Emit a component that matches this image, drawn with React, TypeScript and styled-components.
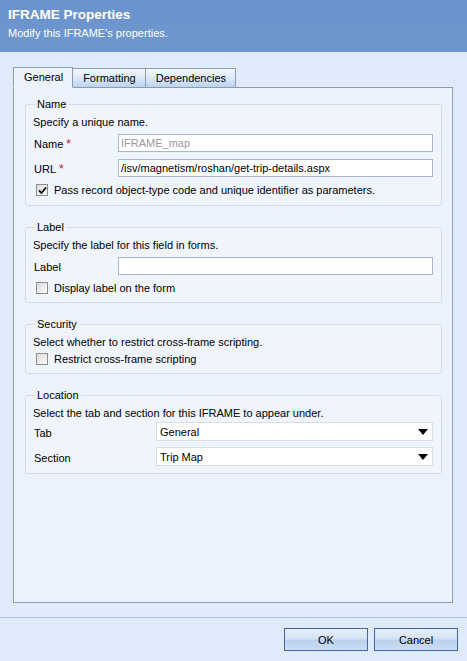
import React from "react";
import styled, { createGlobalStyle } from "styled-components";

const Global = createGlobalStyle`
  html, body { margin: 0; padding: 0; }
  body { font-family: "Liberation Sans", Arial, sans-serif; font-size: 11px; color: #000; background: #dfeafb; }
  * { box-sizing: border-box; }
`;

const Dialog = styled.div`
  width: 467px;
  height: 661px;
  display: flex;
  flex-direction: column;
  background: #dfeafb;
`;

const Header = styled.header`
  height: 52px;
  background: linear-gradient(#6a93cd, #6f97cf);
  color: #fff;
  padding: 6px 8px 0 8px;
  display: flex;
  flex-direction: column;
  gap: 3px;
`;

const Title = styled.h1`
  margin: 0;
  font-size: 13.5px;
  font-weight: bold;
  line-height: 17px;
`;

const Subtitle = styled.p`
  margin: 0;
  font-size: 11px;
  line-height: 15px;
`;

const Content = styled.main`
  flex: 1;
  padding: 15px 14px 14px 13px;
  display: flex;
  flex-direction: column;
`;

const TabBar = styled.div`
  display: flex;
  align-items: flex-end;
  height: 20px;
`;

const Tab = styled.div<{ $active?: boolean }>`
  height: ${(p) => (p.$active ? "21px" : "19px")};
  margin-bottom: ${(p) => (p.$active ? "-1px" : "0")};
  margin-left: -1px;
  &:first-child { margin-left: 0; }
  padding: 0 9px 0 10px;
  display: flex;
  align-items: center;
  border: 1px solid #8e9aae;
  border-bottom: ${(p) => (p.$active ? "1px solid #ebf2fc" : "none")};
  background: ${(p) => (p.$active ? "#ebf2fc" : "linear-gradient(#f4f8fe, #d8e6f8 55%, #bed3f0)")};
  position: relative;
  z-index: ${(p) => (p.$active ? 1 : 0)};
  line-height: 13px;
  padding-top: ${(p) => (p.$active ? "0" : "1px")};
`;

const Panel = styled.section`
  flex: 1;
  border: 1px solid #8e9aae;
  background: #ebf2fc;
  padding: 10px 10px 0 11px;
  display: flex;
  flex-direction: column;
  gap: 15px;
`;

const Group = styled.fieldset<{ $pb?: number }>`
  margin: 0;
  border: 1px solid #d4dce8;
  border-radius: 3px;
  background: #eff4fd;
  padding: 0 8px ${(p) => p.$pb ?? 7}px 7px;
  display: flex;
  flex-direction: column;
  min-width: 0;
`;

const Legend = styled.legend`
  padding: 0 2px;
  margin-left: 2px;
  font-size: 11px;
  line-height: 13px;
`;

const Desc = styled.div`
  margin-top: 4px;
  line-height: 14px;
`;

const Rows = styled.div<{ $mt?: number; $gap?: number }>`
  margin-top: ${(p) => p.$mt ?? 5}px;
  display: flex;
  flex-direction: column;
  gap: ${(p) => p.$gap ?? 7}px;
`;

const Row = styled.div<{ $labelWidth: number }>`
  display: grid;
  grid-template-columns: ${(p) => p.$labelWidth}px 1fr;
  align-items: center;
`;

const FieldLabel = styled.label`
  padding-left: 1px;
  line-height: 14px;
  padding-top: 2px;
`;

const Req = styled.span`
  color: #c8102e;
  margin-left: 3px;
  font-size: 12px;
`;

const Input = styled.div<{ $disabled?: boolean }>`
  height: 18px;
  border: 1px solid #a7b6ca;
  background: #fff;
  color: ${(p) => (p.$disabled ? "#9a9a9a" : "#000")};
  padding: 0 2px;
  line-height: 16px;
  white-space: nowrap;
  overflow: hidden;
`;

const Select = styled.div`
  height: 19px;
  border: 1px solid #d5dde8;
  background: #fff;
  display: flex;
  align-items: center;
  justify-content: space-between;
  padding: 0 4px 0 3px;
  line-height: 16px;
`;

const Arrow = styled.span`
  width: 0;
  height: 0;
  border-left: 5px solid transparent;
  border-right: 5px solid transparent;
  border-top: 6px solid #000;
`;

const CheckRow = styled.div<{ $mt?: number }>`
  display: flex;
  align-items: center;
  gap: 6px;
  height: 16px;
  margin-top: ${(p) => p.$mt ?? 5}px;
  padding-left: 3px;
`;

const Box = styled.span`
  width: 12px;
  height: 12px;
  border: 1px solid #8d8d8d;
  background: linear-gradient(135deg, #dcdcdc, #fafafa);
  display: flex;
  align-items: center;
  justify-content: center;
`;

const Footer = styled.footer`
  height: 44px;
  border-top: 1px solid #aac0dc;
  display: flex;
  justify-content: flex-end;
  align-items: flex-start;
  gap: 6px;
  padding: 10px 9px 0 0;
`;

const Button = styled.button`
  width: 84px;
  height: 23px;
  border: 1px solid #4467a8;
  background: linear-gradient(#e9f0fb, #d5e3f5 45%, #bcd1ee 55%, #cddef3);
  font-family: "Liberation Sans", Arial, sans-serif;
  font-size: 11px;
  color: #000;
  padding: 0;
`;

const Check = ({ checked }: { checked?: boolean }) => (
  <Box>
    {checked && (
      <svg width="9" height="9" viewBox="0 0 9 9">
        <path d="M1 4.5 L3.5 7 L8 1.5" stroke="#000" strokeWidth="1.8" fill="none" />
      </svg>
    )}
  </Box>
);

export default function App() {
  return (
    <>
      <Global />
      <Dialog>
        <Header>
          <Title>IFRAME Properties</Title>
          <Subtitle>Modify this IFRAME's properties.</Subtitle>
        </Header>
        <Content>
          <TabBar>
            <Tab $active>General</Tab>
            <Tab>Formatting</Tab>
            <Tab>Dependencies</Tab>
          </TabBar>
          <Panel>
            <Group>
              <Legend>Name</Legend>
              <Desc>Specify a unique name.</Desc>
              <Rows>
                <Row $labelWidth={85}>
                  <FieldLabel>Name<Req>*</Req></FieldLabel>
                  <Input $disabled>IFRAME_map</Input>
                </Row>
                <Row $labelWidth={85}>
                  <FieldLabel>URL<Req>*</Req></FieldLabel>
                  <Input>/isv/magnetism/roshan/get-trip-details.aspx</Input>
                </Row>
              </Rows>
              <CheckRow>
                <Check checked />
                Pass record object-type code and unique identifier as parameters.
              </CheckRow>
            </Group>
            <Group $pb={6}>
              <Legend>Label</Legend>
              <Desc>Specify the label for this field in forms.</Desc>
              <Rows>
                <Row $labelWidth={85}>
                  <FieldLabel>Label</FieldLabel>
                  <Input />
                </Row>
              </Rows>
              <CheckRow>
                <Check />
                Display label on the form
              </CheckRow>
            </Group>
            <Group $pb={6}>
              <Legend>Security</Legend>
              <Desc>Select whether to restrict cross-frame scripting.</Desc>
              <CheckRow $mt={2}>
                <Check />
                Restrict cross-frame scripting
              </CheckRow>
            </Group>
            <Group>
              <Legend>Location</Legend>
              <Desc>Select the tab and section for this IFRAME to appear under.</Desc>
              <Rows $mt={2} $gap={6}>
                <Row $labelWidth={123}>
                  <FieldLabel>Tab</FieldLabel>
                  <Select>General<Arrow /></Select>
                </Row>
                <Row $labelWidth={123}>
                  <FieldLabel>Section</FieldLabel>
                  <Select>Trip Map<Arrow /></Select>
                </Row>
              </Rows>
            </Group>
          </Panel>
        </Content>
        <Footer>
          <Button>OK</Button>
          <Button>Cancel</Button>
        </Footer>
      </Dialog>
    </>
  );
}
